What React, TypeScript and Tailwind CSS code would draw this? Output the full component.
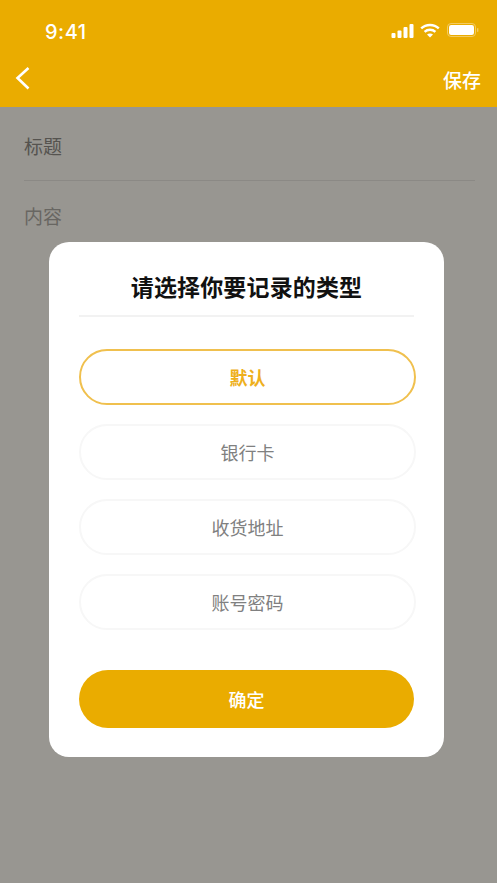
const options = ["默认", "银行卡", "收货地址", "账号密码"];

function StatusIcons() {
  return (
    <div className="flex items-center gap-[5px]">
      <svg width="23" height="15" viewBox="0 0 23 15" fill="white" className="mr-[1px]">
        <rect x="0.5" y="10" width="4" height="5" rx="1" />
        <rect x="6.5" y="7.5" width="4" height="7.5" rx="1" />
        <rect x="12.5" y="4" width="4" height="11" rx="1" />
        <rect x="18.5" y="1" width="4" height="14" rx="1" />
      </svg>
      <svg width="20" height="15" viewBox="0 0 20 15" fill="none" stroke="white" strokeWidth="2.4">
        <path d="M1.2 5.4C6 0.8 14 0.8 18.8 5.4" />
        <path d="M4.6 8.8C7.6 6 12.4 6 15.4 8.8" />
        <path d="M10 14.6L7 11.6C8.6 10.2 11.4 10.2 13 11.6Z" fill="white" stroke="none" />
      </svg>
      <svg width="32" height="16" viewBox="0 0 32 16" fill="none" className="ml-[2px]">
        <rect x="0.5" y="1.5" width="28" height="13" rx="3.5" stroke="#f3cb62" />
        <rect x="2" y="3" width="25" height="10" rx="2.2" fill="white" />
        <rect x="30" y="6" width="1.4" height="4" rx="0.7" fill="#f3cb62" />
      </svg>
    </div>
  );
}

export default function App() {
  return (
    <div
      className="relative h-[883px] w-[497px] overflow-hidden bg-[#989691]"
      style={{ fontFamily: '"Noto Sans CJK SC", "Noto Sans", sans-serif' }}
    >
      <header className="h-[107px] bg-[#eaac00] text-white">
        <div className="flex h-[62px] items-start justify-between pl-[45px] pr-[18px] pt-[20px]">
          <span className="text-[20px] font-medium leading-[24px] tracking-[0.5px]" style={{ fontFamily: '"Inter", sans-serif' }}>
            9:41
          </span>
          <div className="pt-[2px]">
            <StatusIcons />
          </div>
        </div>
        <div className="flex items-center justify-between pl-[15px] pr-[16px] pt-[6px]">
          <svg width="16" height="24" viewBox="0 0 16 24" fill="none" stroke="white" strokeWidth="2.6" className="-mt-[4px]">
            <path d="M13.5 2L2.5 12L13.5 22.5" />
          </svg>
          <span className="text-[19px] font-medium leading-[24px]">保存</span>
        </div>
      </header>

      <section className="pl-[24px] pr-[22px] text-[19px] text-[#55534f]">
        <div className="flex h-[74px] items-center border-b border-[#8b8985] pt-[6px]">标题</div>
        <div className="flex h-[72px] items-center pb-[2px] text-[#686662]">内容</div>
      </section>

      <div className="absolute left-[49px] top-[242px] flex h-[515px] w-[395px] flex-col rounded-[20px] bg-white px-[30px]">
        <h1 className="flex h-[75px] w-[335px] items-center justify-center border-b-2 border-[#f2f2f2] pt-[15px] text-[23px] font-bold leading-[30px] tracking-[0.15px] text-[#111111]">
          请选择你要记录的类型
        </h1>
        <div className="mt-[32px] flex w-[337px] flex-col gap-[19px]">
          {options.map((label, i) => (
            <button
              key={label}
              className={
                i === 0
                  ? "flex h-[56px] items-center justify-center rounded-full border-2 border-[#f0c04e] text-[18px] font-bold text-[#eeb01c]"
                  : "flex h-[56px] items-center justify-center rounded-full border-2 border-[#f7f7f7] text-[18px] text-[#808080]"
              }
            >
              {label}
            </button>
          ))}
        </div>
        <button className="mt-[40px] flex h-[58px] w-[335px] items-center justify-center rounded-full bg-[#eaac00] text-[18px] font-medium text-white">
          确定
        </button>
      </div>
    </div>
  );
}
